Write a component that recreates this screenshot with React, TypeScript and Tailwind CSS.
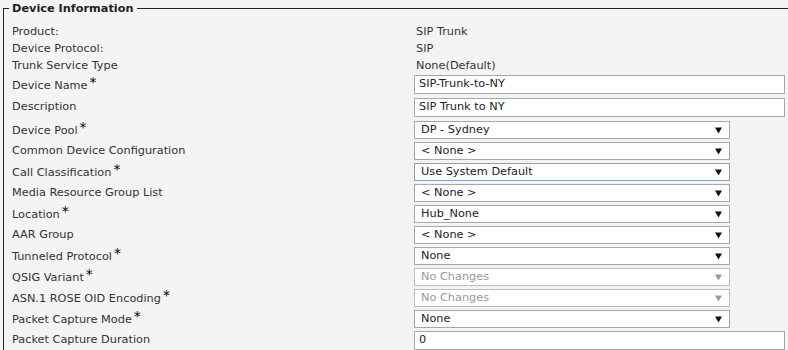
import React from "react";

type Row =
  | { kind: "text"; label: string; value: string; h: string }
  | { kind: "input"; label: string; value: string; req?: boolean }
  | { kind: "select"; label: string; value: string; req?: boolean; disabled?: boolean; focus?: boolean };

const rows: Row[] = [
  { kind: "text", label: "Product:", value: "SIP Trunk", h: "h-[17px]" },
  { kind: "text", label: "Device Protocol:", value: "SIP", h: "h-[17px]" },
  { kind: "text", label: "Trunk Service Type", value: "None(Default)", h: "h-[16px]" },
  { kind: "input", label: "Device Name", value: "SIP-Trunk-to-NY", req: true },
  { kind: "input", label: "Description", value: "SIP Trunk to NY" },
  { kind: "select", label: "Device Pool", value: "DP - Sydney", req: true },
  { kind: "select", label: "Common Device Configuration", value: "< None >" },
  { kind: "select", label: "Call Classification", value: "Use System Default", req: true, focus: true },
  { kind: "select", label: "Media Resource Group List", value: "< None >" },
  { kind: "select", label: "Location", value: "Hub_None", req: true },
  { kind: "select", label: "AAR Group", value: "< None >" },
  { kind: "select", label: "Tunneled Protocol", value: "None", req: true },
  { kind: "select", label: "QSIG Variant", value: "No Changes", req: true, disabled: true },
  { kind: "select", label: "ASN.1 ROSE OID Encoding", value: "No Changes", req: true, disabled: true },
  { kind: "select", label: "Packet Capture Mode", value: "None", req: true },
  { kind: "input", label: "Packet Capture Duration", value: "0" },
];

function Label({ text, req }: { text: string; req?: boolean }) {
  return (
    <div className="w-[402px] shrink-0 whitespace-nowrap">
      {text}
      {req && <span className="ml-[2px] text-[14px] leading-none text-black align-[2px]">*</span>}
    </div>
  );
}

function Arrow({ disabled }: { disabled?: boolean }) {
  return (
    <svg width="7" height="7" viewBox="0 0 7 7" className="mr-[7px]">
      <polygon points="0,0.5 7,0.5 3.5,6.5" fill={disabled ? "#9a9a9a" : "#111"} />
    </svg>
  );
}

export default function App() {
  return (
    <div className="w-[788px] h-[350px] overflow-hidden bg-[#f4f4f4] text-[11.3px] text-[#333] font-['Verdana','DejaVu_Sans',sans-serif]">
      <fieldset className="ml-[3px] mt-0 w-[800px] border-l border-t border-[#222] pl-[8px] pt-[7px]">
        <legend className="ml-[-3px] px-[3px] text-[11.3px] font-bold leading-[17px] text-[#222]">
          Device Information
        </legend>
        <div className="flex flex-col">
          {rows.map((r, i) => {
            if (r.kind === "text") {
              return (
                <div key={i} className={"flex items-center " + r.h}>
                  <Label text={r.label} />
                  <div className="pl-[2px]">{r.value}</div>
                </div>
              );
            }
            if (r.kind === "input") {
              return (
                <div key={i} className="flex h-[23px] items-start pt-[1px]">
                  <div className="flex h-[19px] items-center">
                    <Label text={r.label} req={r.req} />
                  </div>
                  <div className="flex h-[19px] w-[371px] items-center border border-[#a8a8a8] bg-white pl-[4px] text-[#222]">
                    {r.value}
                  </div>
                </div>
              );
            }
            return (
              <div key={i} className="flex h-[21px] items-start pt-[1px]">
                <div className="flex h-[18px] items-center">
                  <Label text={r.label} req={r.req} />
                </div>
                <div
                  className={
                    "flex h-[18px] w-[316px] items-center justify-between bg-white pl-[6px] border " +
                    (r.focus ? "border-[#8aa0bb] " : r.disabled ? "border-[#bdbdbd] " : "border-[#a8a8a8] ") +
                    (r.disabled ? "text-[#999]" : "text-[#222]")
                  }
                >
                  <span>{r.value}</span>
                  <Arrow disabled={r.disabled} />
                </div>
              </div>
            );
          })}
        </div>
      </fieldset>
    </div>
  );
}
